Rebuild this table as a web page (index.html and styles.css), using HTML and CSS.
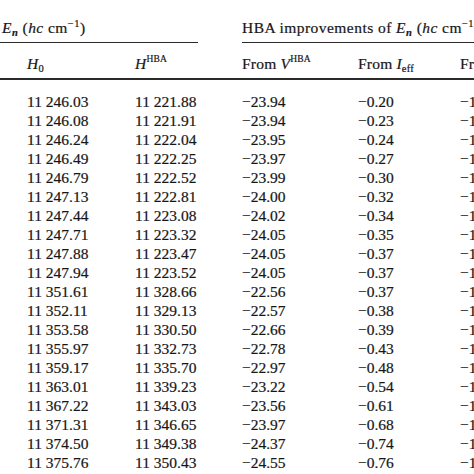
FILE: index.html
```html
<!DOCTYPE html>
<html>
<head>
<meta charset="utf-8">
<link rel="stylesheet" href="styles.css">
</head>
<body>
<div class="table">
  <div class="group-head">
    <div class="gh gh-energy"><i>E</i><sub><b><i>n</i></b></sub> (<i>hc</i> cm<sup>−1</sup>)</div>
    <div class="gh gh-hba">HBA improvements of <i>E</i><sub><b><i>n</i></b></sub> (<i>hc</i> cm<sup>−1</sup>)</div>
  </div>
  <div class="row col-head">
    <div><i>H</i><sub>0</sub></div>
    <div><i>H</i><sup class="sc">HBA</sup></div>
    <div>From <i>V</i><sup class="sc">HBA</sup></div>
    <div>From <i>I</i><sub>eff</sub></div>
    <div>From <i>E</i></div>
  </div>
  <div class="body">
    <div class="row"><div>11 246.03</div><div>11 221.88</div><div>−23.94</div><div>−0.20</div><div>−1.43</div></div>
    <div class="row"><div>11 246.08</div><div>11 221.91</div><div>−23.94</div><div>−0.23</div><div>−1.43</div></div>
    <div class="row"><div>11 246.24</div><div>11 222.04</div><div>−23.95</div><div>−0.24</div><div>−1.43</div></div>
    <div class="row"><div>11 246.49</div><div>11 222.25</div><div>−23.97</div><div>−0.27</div><div>−1.44</div></div>
    <div class="row"><div>11 246.79</div><div>11 222.52</div><div>−23.99</div><div>−0.30</div><div>−1.44</div></div>
    <div class="row"><div>11 247.13</div><div>11 222.81</div><div>−24.00</div><div>−0.32</div><div>−1.45</div></div>
    <div class="row"><div>11 247.44</div><div>11 223.08</div><div>−24.02</div><div>−0.34</div><div>−1.45</div></div>
    <div class="row"><div>11 247.71</div><div>11 223.32</div><div>−24.05</div><div>−0.35</div><div>−1.46</div></div>
    <div class="row"><div>11 247.88</div><div>11 223.47</div><div>−24.05</div><div>−0.37</div><div>−1.46</div></div>
    <div class="row"><div>11 247.94</div><div>11 223.52</div><div>−24.05</div><div>−0.37</div><div>−1.46</div></div>
    <div class="row"><div>11 351.61</div><div>11 328.66</div><div>−22.56</div><div>−0.37</div><div>−1.39</div></div>
    <div class="row"><div>11 352.11</div><div>11 329.13</div><div>−22.57</div><div>−0.38</div><div>−1.39</div></div>
    <div class="row"><div>11 353.58</div><div>11 330.50</div><div>−22.66</div><div>−0.39</div><div>−1.40</div></div>
    <div class="row"><div>11 355.97</div><div>11 332.73</div><div>−22.78</div><div>−0.43</div><div>−1.41</div></div>
    <div class="row"><div>11 359.17</div><div>11 335.70</div><div>−22.97</div><div>−0.48</div><div>−1.42</div></div>
    <div class="row"><div>11 363.01</div><div>11 339.23</div><div>−23.22</div><div>−0.54</div><div>−1.43</div></div>
    <div class="row"><div>11 367.22</div><div>11 343.03</div><div>−23.56</div><div>−0.61</div><div>−1.45</div></div>
    <div class="row"><div>11 371.31</div><div>11 346.65</div><div>−23.97</div><div>−0.68</div><div>−1.47</div></div>
    <div class="row"><div>11 374.50</div><div>11 349.38</div><div>−24.37</div><div>−0.74</div><div>−1.49</div></div>
    <div class="row"><div>11 375.76</div><div>11 350.43</div><div>−24.55</div><div>−0.76</div><div>−1.50</div></div>
  </div>
</div>
</body>
</html>
```
FILE: styles.css
```css
html, body {
  margin: 0;
  padding: 0;
  background: #ffffff;
}
body {
  width: 474px;
  height: 474px;
  overflow: hidden;
}
.table {
  width: 474px;
  overflow: hidden;
  font-family: "Liberation Serif", "Times New Roman", serif;
  font-size: 15.5px;
  line-height: 19px;
  color: #161616;
  -webkit-text-stroke: 0.2px #161616;
}
.table sub, .table sup {
  line-height: 0;
  font-size: 10.5px;
}
.table sub {
  vertical-align: -3px;
}
.table sup {
  vertical-align: 6px;
}
.table sup.sc {
  font-size: 9.5px;
  vertical-align: 7px;
}
.group-head {
  display: grid;
  grid-template-columns: 198px 260px;
  column-gap: 44px;
  letter-spacing: 0.45px;
}
.gh {
  padding: 18px 0 5px;
  border-bottom: 1px solid #2a2a2a;
  white-space: nowrap;
  overflow: hidden;
}
.gh-energy {
  padding-left: 2px;
}
.row {
  display: grid;
  grid-template-columns: 108px 107px 116px 102px 60px;
  padding-left: 27px;
  white-space: nowrap;
}
.col-head {
  margin-top: 11px;
  padding-bottom: 5px;
  border-bottom: 2px solid #2a2a2a;
  letter-spacing: 0.2px;
}
.body {
  padding-top: 12px;
}
```
